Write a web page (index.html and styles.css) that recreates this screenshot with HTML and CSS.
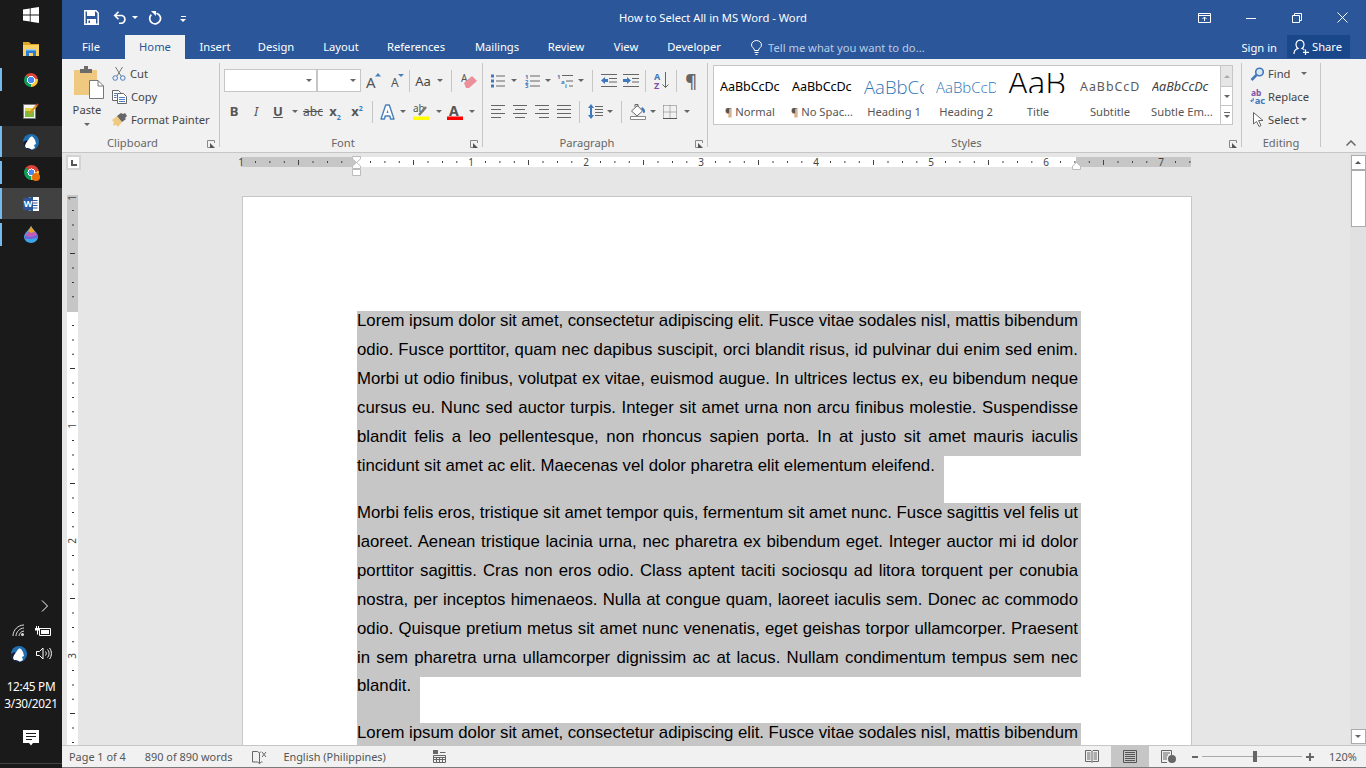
FILE: index.html
```html
<!DOCTYPE html>
<html lang="en">
<head>
<meta charset="utf-8">
<title>How to Select All in MS Word - Word</title>
<link rel="stylesheet" href="styles.css">
</head>
<body>
<div class="app">
  <aside class="taskbar">
    <div class="tb-item tb-start">
      <svg width="16" height="16" viewBox="0 0 16 16"><path fill="#fff" d="M0 2.4 6.8 1.4V7.5H0zM7.6 1.3 16 0V7.5H7.6zM0 8.4H6.8V14.6L0 13.6zM7.6 8.4H16V16L7.6 14.7z"/></svg>
    </div>
    <div class="tb-item">
      <svg width="16" height="14" viewBox="0 0 16 14"><path fill="#e0a526" d="M0 0H6L8 2H16V4H0z"/><path fill="#fbd065" d="M0 3H16V14H0z"/><path fill="#2b7cd3" d="M3 8H13V14H10V11H6V14H3z"/><path fill="#9fd0f5" d="M3 7H13V8.5H3z"/></svg>
    </div>
    <div class="tb-item tb-open"><span class="chrome"></span></div>
    <div class="tb-item">
      <svg width="16" height="16" viewBox="0 0 16 16"><path fill="#f6f6f0" stroke="#777" d="M.5 1.5H12.5V15.5H.5z"/><path fill="#7fbb3a" d="M2 8H11V14H2z"/><path fill="#e6d642" d="M2 5H11V8H2z"/><path stroke="#d8962a" stroke-width="2" d="M6 11 14 2"/><path stroke="#c0392b" stroke-width="2" d="M13.5 2.5 15 1"/></svg>
    </div>
    <div class="tb-item tb-open tb-running">
      <svg width="16" height="16" viewBox="0 0 16 16"><circle cx="8" cy="8" r="8" fill="#1f6fb0"/><path fill="#141a3a" d="M0 8A8 8 0 0 0 8 16L4 6z"/><path fill="#fff" d="M2 12C3 8 5 7 6.500 4 7.500 2.500 9 2 10 3L12 6 13 10 11 11 12 14 9 15.500 5 14 3 14z"/></svg>
    </div>
    <div class="tb-item tb-open">
      <span class="chrome chrome-badge"><span class="badge"></span></span>
    </div>
    <div class="tb-item tb-open tb-active">
      <svg width="16" height="16" viewBox="0 0 16 16"><path fill="#fff" d="M6 1H16V15H6z"/><path stroke="#2b579a" d="M10 4.500H14.500M10 7H14.500M10 9.500H14.500M10 12H14.500"/><path fill="#2b579a" d="M0 2.500 10 .8V15.200L0 13.500z"/><text x="5" y="11" class="word-w">W</text></svg>
    </div>
    <div class="tb-item tb-open">
      <svg width="14" height="17" viewBox="0 0 14 17"><path fill="#3ea6e6" d="M7 0C9 4 14 7 14 11A7 6 0 0 1 0 11C0 7 5 4 7 0z"/><path fill="#f0a020" d="M7 0C8.500 3 10 4 11 6L7 7 4 5.500C5 4 6.200 2.500 7 0z"/><path fill="#c45ab3" d="M4 5.500 7 7 11 6 13.500 9 7 11 1 10z"/><path fill="#6f63d8" d="M1 10 7 11 13.500 9 13.500 12 7 13 .5 13z"/></svg>
    </div>
    <div class="tray">
      <svg class="tray-chevron" width="8" height="12" viewBox="0 0 8 12"><path fill="none" stroke="#fff" d="M1 .5 6.500 6 1 11.500"/></svg>
      <div class="tray-row">
        <svg width="14" height="13" viewBox="0 0 14 13"><path fill="none" stroke="#ddd" d="M1 12C1 6 6 1 12 1M4 12C4 8 8 4 12 4M7 12C7 10 9 7 12 7"/><circle cx="10.500" cy="10.500" r="1.500" fill="#ddd"/></svg>
        <svg width="16" height="12" viewBox="0 0 16 12"><path fill="none" stroke="#fff" d="M4.500 3.500H15.500V10.500H4.500z"/><path fill="#fff" d="M6 5H14V9H6zM1 1H2V3H3V1H4V3H5V5.500H3V9.500H2V5.500H0V3H1z"/></svg>
      </div>
      <div class="tray-row">
        <svg width="16" height="16" viewBox="0 0 16 16"><circle cx="8" cy="8" r="8" fill="#1f6fb0"/><path fill="#141a3a" d="M0 8A8 8 0 0 0 8 16L4 6z"/><path fill="#fff" d="M2 12C3 8 5 7 6.500 4 7.500 2.500 9 2 10 3L12 6 13 10 11 11 12 14 9 15.500 5 14 3 14z"/></svg>
        <svg width="16" height="13" viewBox="0 0 16 13"><path fill="none" stroke="#fff" d="M.5 4.500H3.500L7 1V12L3.500 8.500H.5zM9.500 4.500C10.500 5.500 10.500 7.500 9.500 8.500M11.500 2.500C13.500 4.500 13.500 8.500 11.500 10.500M13.500 1C16 4 16 9 13.500 12"/></svg>
      </div>
      <div class="clock">12:45 PM</div>
      <div class="clock">3/30/2021</div>
      <svg class="notify" width="16" height="16" viewBox="0 0 16 16"><path fill="#fff" d="M0 0H16V13H10L8 15.500 6 13H0z"/><path stroke="#1a1a1a" d="M3 3.500H13M3 6.500H13M3 9.500H9"/></svg>
      <div class="tb-line"></div>
    </div>
  </aside>

  <main class="window">
    <header class="titlebar">
      <div class="qat">
        <svg class="qat-save" width="15" height="15" viewBox="0 0 15 15"><path fill="none" stroke="#fff" stroke-width="1.500" d="M.8.8H12L14.200 3V14.200H.8z"/><path fill="#fff" d="M3 1H11V6H3zM3 9H12V14H3z"/><path fill="#2b579a" d="M4.500 10.500H6V13H4.500z"/></svg>
        <svg class="qat-undo" width="15" height="13" viewBox="0 0 15 13"><path fill="none" stroke="#fff" stroke-width="1.600" d="M2 4.500H9A4 4 0 0 1 9 12.200H6"/><path fill="none" stroke="#fff" stroke-width="1.600" d="M5.500.7 1.700 4.500 5.500 8.300"/></svg>
        <span class="caret caret-white qat-caret"></span>
        <svg class="qat-redo" width="14" height="14" viewBox="0 0 14 14"><path fill="none" stroke="#fff" stroke-width="1.700" d="M8.500 2.200A5.400 5.400 0 1 1 3.300 3.600"/><path fill="#fff" d="M3 0H8V5z"/></svg>
        <span class="qat-more"><span class="qat-bar"></span><span class="caret caret-white"></span></span>
      </div>
      <div class="title">How to Select All in MS Word - Word</div>
      <div class="winctl">
        <svg width="13" height="10" viewBox="0 0 13 10"><path fill="none" stroke="#fff" d="M.5.500H12.500V9.500H.5zM.5 2.500H12.500M6.500 8V4M4.500 6 6.500 4 8.500 6"/></svg>
        <svg class="win-min" width="10" height="10" viewBox="0 0 10 10"><path stroke="#fff" d="M0 5.500H10"/></svg>
        <svg class="win-max" width="10" height="10" viewBox="0 0 10 10"><path fill="none" stroke="#fff" d="M.5 2.500H7.500V9.500H.5zM2.500 2.500V.5H9.500V7.500H7.500"/></svg>
        <svg class="win-close" width="11" height="11" viewBox="0 0 11 11"><path stroke="#fff" d="M.5.500 10.500 10.500M10.500.5.500 10.500"/></svg>
      </div>
    </header>

    <nav class="tabs">
      <span class="tab tab-file">File</span>
      <span class="tab tab-home">Home</span>
      <span class="tab tab-insert">Insert</span>
      <span class="tab tab-design">Design</span>
      <span class="tab tab-layout">Layout</span>
      <span class="tab tab-refs">References</span>
      <span class="tab tab-mail">Mailings</span>
      <span class="tab tab-review">Review</span>
      <span class="tab tab-view">View</span>
      <span class="tab tab-dev">Developer</span>
      <svg class="bulb" width="11" height="15" viewBox="0 0 11 15"><path fill="none" stroke="#fff" d="M3.500 10.500C3.500 8 .5 7.500.5 5A5 4.500 0 0 1 10.500 5C10.500 7.500 7.500 8 7.500 10.500zM3.500 12.500H7.500M4.500 14.500H6.500"/></svg>
      <span class="tellme">Tell me what you want to do...</span>
      <span class="signin">Sign in</span>
      <span class="share">
        <svg width="16" height="16" viewBox="0 0 16 16"><path fill="none" stroke="#fff" stroke-width="1.200" d="M1 15C1 11.500 3 10 5 9.500A4 4.500 0 1 1 9 9.500C10 9.800 10.800 10.300 11.300 11"/><path stroke="#fff" stroke-width="1.200" d="M12.500 10.500V16M10 13.300H16"/></svg>
        Share
      </span>
    </nav>

    <section class="ribbon">
      <div class="group g-clip">
        <div class="group-body clip-body">
          <div class="paste">
            <svg width="30" height="33" viewBox="0 0 30 33"><path fill="#f0c981" d="M0 4H23V27H18V13H0z"/><path fill="#f0c981" d="M0 12H18V29H0z"/><path fill="#6b6b6b" d="M6 3H10V0H14V3H18V7H6z"/><path fill="#fff" stroke="#777" d="M15.500 14.500H24L29.500 20V32.500H15.500z"/><path fill="none" stroke="#777" d="M24 14.500V20H29.500"/></svg>
            <span class="paste-label">Paste</span>
            <span class="caret"></span>
          </div>
          <div class="clip-list">
            <div class="small-btn">
              <svg width="14" height="15" viewBox="0 0 14 15"><path fill="none" stroke="#777" d="M3.500 1 9 10M10.500 1 5 10"/><circle cx="3.200" cy="12" r="2.300" fill="none" stroke="#4a7fbb"/><circle cx="10.800" cy="12" r="2.300" fill="none" stroke="#4a7fbb"/></svg>
              <span>Cut</span>
            </div>
            <div class="small-btn">
              <svg width="15" height="14" viewBox="0 0 15 14"><path fill="#fff" stroke="#666" d="M.5.500H6.500L8.500 2.500V10.500H.5z"/><path fill="#fff" stroke="#666" d="M5.500 3.500H11.500L14.500 6.500V13.500H5.500z"/><path stroke="#4a7fbb" d="M2 3.500H5M2 5.500H4.500M2 7.500H4.500M7 7.500H13M7 9.500H13M7 11.500H13"/></svg>
              <span>Copy</span>
            </div>
            <div class="small-btn">
              <svg width="15" height="14" viewBox="0 0 15 14"><path fill="#f0c981" d="M0 7 5 3 10 9 6 14C5 13 4 11 3 12L2 13 1 11 2 9.500z"/><path fill="#666" d="M5 3 9 0 11 1 13 0 15 3 13 5 14 6 10 9z"/></svg>
              <span>Format Painter</span>
            </div>
          </div>
        </div>
        <div class="group-label with-launcher">Clipboard<svg class="launcher" width="8" height="8" viewBox="0 0 8 8"><path fill="none" stroke="#888" d="M7.500 3V.5H.5V7.500H3"/><path fill="#555" d="M3 3 8 8H3z"/></svg></div>
      </div>

      <div class="group g-font">
        <div class="group-body">
          <div class="tool-row font-r1">
            <span class="combo"><span class="caret"></span></span>
            <span class="combo"><span class="caret"></span></span>
            <svg width="15" height="15" viewBox="0 0 15 15"><text x="0" y="15" class="big-a">A</text><path fill="#4a7fbb" d="M9 3.500 12 0 15 3.500z"/></svg>
            <svg width="13" height="13" viewBox="0 0 13 13"><text x="0" y="13" class="small-a">A</text><path fill="#4a7fbb" d="M7 0H13L10 3z"/></svg>
            <span class="vsep"></span>
            <span class="aa">Aa</span>
            <span class="caret"></span>
            <span class="vsep"></span>
            <svg width="17" height="16" viewBox="0 0 17 16"><text x="0" y="9" class="erase-a">A</text><path fill="#ec8f9a" d="M3 10 11 3 16 8 8 15 5 15z"/></svg>
          </div>
          <div class="tool-row font-r2">
            <span class="fmt fmt-b">B</span>
            <span class="fmt fmt-i">I</span>
            <span class="fmt fmt-u">U</span>
            <span class="caret"></span>
            <span class="fmt-abc">abc</span>
            <span class="fmt-sub">x<sub>2</sub></span>
            <span class="fmt-sub">x<sup>2</sup></span>
            <span class="vsep"></span>
            <svg width="15" height="16" viewBox="0 0 15 16"><path fill="#fff" stroke="#4a7fbb" stroke-width="1.400" stroke-linejoin="round" d="M5.700 1H9.300L14 15H10.600L9.800 12H5.200L4.400 15H1z"/><path fill="#4a7fbb" d="M6.500 9H8.500L7.500 5.500z"/></svg>
            <span class="caret"></span>
            <svg width="16" height="16" viewBox="0 0 16 16"><text x="0" y="8" class="hl-text">ab</text><path stroke="#777" stroke-width="2.500" d="M6 11 13 3"/><path fill="#ffff00" d="M0 12.500H16V16H0z"/></svg>
            <span class="caret"></span>
            <svg width="16" height="16" viewBox="0 0 16 16"><text x="2" y="12" class="fc-text">A</text><path fill="#ff0000" d="M0 12.500H16V16H0z"/></svg>
            <span class="caret"></span>
          </div>
        </div>
        <div class="group-label with-launcher">Font<svg class="launcher" width="8" height="8" viewBox="0 0 8 8"><path fill="none" stroke="#888" d="M7.500 3V.5H.5V7.500H3"/><path fill="#555" d="M3 3 8 8H3z"/></svg></div>
      </div>

      <div class="group g-para">
        <div class="group-body">
          <div class="tool-row para-r1">
            <svg width="14" height="14" viewBox="0 0 14 14"><path fill="#3f78bc" d="M0 .5H3V3.500H0zM0 5.500H3V8.500H0zM0 10.500H3V13.500H0z"/><path stroke="#666" d="M5 2H14M5 7H14M5 12H14"/></svg>
            <span class="caret"></span>
            <svg width="15" height="14" viewBox="0 0 15 14"><text x="0" y="4.500" class="list-n">1</text><text x="0" y="9.500" class="list-n">2</text><text x="0" y="14" class="list-n">3</text><path stroke="#666" d="M5 2H15M5 7H15M5 12H15"/></svg>
            <span class="caret"></span>
            <svg width="16" height="14" viewBox="0 0 16 14"><text x="0" y="4.500" class="list-n">1</text><text x="4" y="9.500" class="list-n">a</text><text x="8" y="14" class="list-n">i</text><path stroke="#666" d="M5 1.500H16M9 7H16M12 12H16"/></svg>
            <span class="caret"></span>
            <span class="vsep"></span>
            <svg width="16" height="13" viewBox="0 0 16 13"><path stroke="#666" d="M0 .5H16M8 4.500H16M8 8H16M0 12.500H16"/><path fill="#3f78bc" d="M0 6.500 4 3V5H7V8H4V10z"/></svg>
            <svg width="16" height="13" viewBox="0 0 16 13"><path stroke="#666" d="M0 .5H16M9 4.500H16M9 8H16M0 12.500H16"/><path fill="#3f78bc" d="M8 6.500 4 3V5H0V8H4V10z"/></svg>
            <span class="vsep"></span>
            <svg width="15" height="17" viewBox="0 0 15 17"><text x="0" y="7.500" class="sort-a">A</text><text x="0" y="16.500" class="sort-z">Z</text><path fill="none" stroke="#666" d="M11.500 0V15.500M8.500 12.500 11.500 15.500 14.500 12.500"/></svg>
            <span class="vsep"></span>
            <span class="pilcrow">¶</span>
          </div>
          <div class="tool-row para-r2">
            <svg class="al" width="14" height="13" viewBox="0 0 14 13"><path stroke="#666" d="M0 .5H14M0 4.500H10M0 8.500H14M0 12.500H10"/></svg>
            <svg class="al" width="14" height="13" viewBox="0 0 14 13"><path stroke="#666" d="M0 .5H14M2 4.500H12M0 8.500H14M2 12.500H12"/></svg>
            <svg class="al" width="14" height="13" viewBox="0 0 14 13"><path stroke="#666" d="M0 .5H14M4 4.500H14M0 8.500H14M4 12.500H14"/></svg>
            <svg class="al" width="14" height="13" viewBox="0 0 14 13"><path stroke="#666" d="M0 .5H14M0 4.500H14M0 8.500H14M0 12.500H14"/></svg>
            <span class="vsep"></span>
            <svg width="15" height="15" viewBox="0 0 15 15"><path fill="#3f78bc" d="M3 0 6 4H4V11H6L3 15 0 11H2V4H0z"/><path stroke="#666" d="M7 2.500H15M7 5.500H15M7 8.500H15M7 11.500H15"/></svg>
            <span class="caret"></span>
            <span class="vsep"></span>
            <svg width="17" height="17" viewBox="0 0 17 17"><path fill="#fff" stroke="#666" d="M1.500 8 7.500 2.500 12.500 8 7 13z"/><path fill="none" stroke="#666" d="M5 4V1.500H8V4"/><path fill="#3f78bc" d="M12 4C14 5 15.500 7 15 9.500L13 10C13 8 12.500 7 11 6z"/><path fill="#fff" stroke="#888" d="M.5 13.500H15.500V16.500H.5z"/></svg>
            <span class="caret"></span>
            <svg width="14" height="14" viewBox="0 0 14 14"><path fill="none" stroke="#777" stroke-dasharray="1 1" d="M.5.500H13.500V13.500M.5.500V13.500M7 .5V13.500M.5 7H13.500"/><path stroke="#555" d="M0 13.500H14"/></svg>
            <span class="caret"></span>
          </div>
        </div>
        <div class="group-label with-launcher">Paragraph<svg class="launcher" width="8" height="8" viewBox="0 0 8 8"><path fill="none" stroke="#888" d="M7.500 3V.5H.5V7.500H3"/><path fill="#555" d="M3 3 8 8H3z"/></svg></div>
      </div>

      <div class="group g-styles">
        <div class="group-body">
          <div class="gallery">
            <div class="style-item"><div class="sample s-normal">AaBbCcDc</div><div class="style-name">¶ Normal</div></div>
            <div class="style-item"><div class="sample s-normal">AaBbCcDc</div><div class="style-name">¶ No Spac...</div></div>
            <div class="style-item"><div class="sample s-h1">AaBbCc</div><div class="style-name">Heading 1</div></div>
            <div class="style-item"><div class="sample s-h2">AaBbCcD</div><div class="style-name">Heading 2</div></div>
            <div class="style-item"><div class="sample"><div class="s-title">AaB</div></div><div class="style-name">Title</div></div>
            <div class="style-item"><div class="sample s-sub">AaBbCcD</div><div class="style-name">Subtitle</div></div>
            <div class="style-item"><div class="sample s-em">AaBbCcDc</div><div class="style-name">Subtle Em...</div></div>
            <div class="gal-scroll">
              <span class="gal-btn gal-up"><span class="caret caret-up"></span></span>
              <span class="gal-btn gal-down"><span class="caret"></span></span>
              <span class="gal-btn gal-more"><span class="more-bar"></span><span class="caret"></span></span>
            </div>
          </div>
        </div>
        <div class="group-label with-launcher">Styles<svg class="launcher" width="8" height="8" viewBox="0 0 8 8"><path fill="none" stroke="#888" d="M7.500 3V.5H.5V7.500H3"/><path fill="#555" d="M3 3 8 8H3z"/></svg></div>
      </div>

      <div class="group g-edit">
        <div class="group-body edit-body">
          <div class="small-btn">
            <svg width="14" height="14" viewBox="0 0 14 14"><circle cx="9" cy="5" r="3.800" fill="#d9e7f5" stroke="#3f78bc" stroke-width="1.600"/><path stroke="#3f78bc" stroke-width="2.500" d="M6 8 1 13"/></svg>
            <span>Find</span><span class="caret find-caret"></span>
          </div>
          <div class="small-btn">
            <svg width="16" height="16" viewBox="0 0 16 16"><text x="1" y="7" class="rep-ab">ab</text><text x="5" y="15" class="rep-ac">ac</text><path fill="none" stroke="#3f78bc" d="M3.500 9V12H.8M2.500 10.500.8 12 2.500 13.500"/></svg>
            <span>Replace</span>
          </div>
          <div class="small-btn">
            <svg class="sel-ic" width="11" height="15" viewBox="0 0 11 15"><path fill="#fff" stroke="#666" d="M.5.500V12L3.500 9.500 6 14.500 8 13.500 5.500 8.500H10z"/></svg>
            <span>Select</span><span class="caret sel-caret"></span>
          </div>
        </div>
        <div class="group-label">Editing</div>
      </div>
      <svg class="collapse" width="10" height="6" viewBox="0 0 10 6"><path fill="none" stroke="#666" stroke-width="1.500" d="M.5 5.500 5 1 9.500 5.500"/></svg>
    </section>

    <div class="workspace">
      <div class="canvas">
        <div class="hruler-row">
          <span class="tab-sel"><span class="tab-l"></span></span>
          <svg class="hruler" width="950" height="22" viewBox="0 0 950 22">
            <defs>
              <pattern id="ht" patternUnits="userSpaceOnUse" width="115" height="22">
                <path fill="#444" d="M14 6h1v2h-1zM28.400 6h1v2h-1zM42.800 6h1v2h-1zM71.500 6h1v2h-1zM86 6h1v2h-1zM100.300 6h1v2h-1z"/>
                <path fill="#444" d="M57 5h1v5h-1z"/>
              </pattern>
            </defs>
            <rect x="0" y="2" width="950" height="10" fill="#c6c6c6"/>
            <rect x="115" y="2" width="720" height="10" fill="#fff"/>
            <rect x="0" y="1" width="950" height="12" fill="url(#ht)"/>
            <text class="rnum" x="0" y="11">1</text><text class="rnum" x="230" y="11">1</text><text class="rnum" x="345" y="11">2</text><text class="rnum" x="460" y="11">3</text><text class="rnum" x="575" y="11">4</text><text class="rnum" x="690" y="11">5</text><text class="rnum" x="805" y="11">6</text><text class="rnum" x="920" y="11">7</text>
            <path fill="#fff" stroke="#bbb" d="M111.500 1.500H119.500V4L115.500 7.500 111.500 4zM115.500 7.500 119.500 11V13.500H111.500V11z"/>
            <path fill="#fff" stroke="#bbb" d="M111.500 14.500H119.500V20.500H111.500z"/>
            <path fill="#fff" stroke="#bbb" d="M835.500 7.500 839.500 11V14.500H831.500V11z"/>
          </svg>
        </div>
        <div class="page-row">
          <svg class="vruler" width="12" height="560" viewBox="0 0 12 560">
            <defs>
              <pattern id="vt" patternUnits="userSpaceOnUse" y="1" width="12" height="115">
                <path fill="#333" d="M5 14h2v1h-2zM5 28.400h2v1h-2zM5 42.800h2v1h-2zM5 71.500h2v1h-2zM5 86h2v1h-2zM5 100.300h2v1h-2z"/>
                <path fill="#333" d="M3 57h5v1h-5z"/>
              </pattern>
            </defs>
            <rect x="0" width="11" height="560" fill="#fff"/>
            <rect x="0" width="11" height="117" fill="#c6c6c6"/>
            <rect x="0" width="11" height="560" fill="url(#vt)"/>
            <text class="rnum" transform="translate(9 3) rotate(-90)">1</text>
            <text class="rnum" transform="translate(9 231) rotate(-90)">1</text>
            <text class="rnum" transform="translate(9 346) rotate(-90)">2</text>
            <text class="rnum" transform="translate(9 461) rotate(-90)">3</text>
          </svg>
          <article class="page">
            <div class="para">
              <div class="line">Lorem ipsum dolor sit amet, consectetur adipiscing elit. Fusce vitae sodales nisl, mattis bibendum</div>
              <div class="line">odio. Fusce porttitor, quam nec dapibus suscipit, orci blandit risus, id pulvinar dui enim sed enim.</div>
              <div class="line">Morbi ut odio finibus, volutpat ex vitae, euismod augue. In ultrices lectus ex, eu bibendum neque</div>
              <div class="line">cursus eu. Nunc sed auctor turpis. Integer sit amet urna non arcu finibus molestie. Suspendisse</div>
              <div class="line">blandit felis a leo pellentesque, non rhoncus sapien porta. In at justo sit amet mauris iaculis</div>
              <div class="line last last-a">tincidunt sit amet ac elit. Maecenas vel dolor pharetra elit elementum eleifend.</div>
            </div>
            <div class="para">
              <div class="line">Morbi felis eros, tristique sit amet tempor quis, fermentum sit amet nunc. Fusce sagittis vel felis ut</div>
              <div class="line">laoreet. Aenean tristique lacinia urna, nec pharetra ex bibendum eget. Integer auctor mi id dolor</div>
              <div class="line">porttitor sagittis. Cras non eros odio. Class aptent taciti sociosqu ad litora torquent per conubia</div>
              <div class="line">nostra, per inceptos himenaeos. Nulla at congue quam, laoreet iaculis sem. Donec ac commodo</div>
              <div class="line">odio. Quisque pretium metus sit amet nunc venenatis, eget geishas torpor ullamcorper. Praesent</div>
              <div class="line">in sem pharetra urna ullamcorper dignissim ac at lacus. Nullam condimentum tempus sem nec</div>
              <div class="line last last-b">blandit.</div>
            </div>
            <div class="para">
              <div class="line">Lorem ipsum dolor sit amet, consectetur adipiscing elit. Fusce vitae sodales nisl, mattis bibendum</div>
            </div>
          </article>
        </div>
      </div>
      <div class="vscroll">
        <span class="sb-btn"><span class="caret caret-up caret-dark"></span></span>
        <span class="sb-thumb"></span>
        <span class="sb-btn sb-down"><span class="caret caret-dark"></span></span>
      </div>
    </div>

    <footer class="statusbar">
      <span class="st-page">Page 1 of 4</span>
      <span class="st-words">890 of 890 words</span>
      <svg class="st-proof" width="15" height="14" viewBox="0 0 15 14"><path fill="none" stroke="#666" d="M.5 1.500H5.500L7.500 3V13.500L5.500 12H.5zM7.500 3 9 1.500M7.500 13.500 9.500 12H10.500"/><path stroke="#666" d="M10 2 14 7M14 2 10 7"/></svg>
      <span class="st-lang">English (Philippines)</span>
      <svg class="st-macro" width="13" height="13" viewBox="0 0 13 13"><path fill="#666" d="M0 0H5V4H0z"/><path fill="none" stroke="#666" d="M.5 5.500H12.500V12.500H.5zM.5 7.500H12.500M.5 9.500H12.500M3.500 7.500V12.500M6.500 7.500V12.500M9.500 7.500V12.500M7 2.500H12.500"/></svg>
      <span class="st-right">
        <span class="view-btn">
          <svg width="14" height="13" viewBox="0 0 14 13"><path fill="none" stroke="#666" d="M.5.500H6L7 1.500 8 .5H13.500V11.500H8L7 12.500 6 11.500H.5zM7 1.500V12M2 3H5.500M2 5H5.500M2 7H5.500M2 9H5.500M8.500 3H12M8.500 5H12M8.500 7H12M8.500 9H12"/></svg>
        </span>
        <span class="view-btn view-active">
          <svg width="14" height="13" viewBox="0 0 14 13"><path fill="none" stroke="#555" d="M.5.500H13.500V12.500H.5zM2 2.500H12M2 4.500H12M2 6.500H12M2 8.500H12M2 10.500H12"/></svg>
        </span>
        <span class="view-btn">
          <svg width="15" height="13" viewBox="0 0 15 13"><path fill="none" stroke="#666" d="M.5.500H10.500V5M.5.500V12.500H6M2 3H9M2 5H7M2 7H6M2 9H6"/><circle cx="11" cy="9" r="4" fill="#666"/></svg>
        </span>
        <span class="zoom-minus"></span>
        <span class="zoom-slider"><span class="zoom-thumb"></span></span>
        <span class="zoom-plus"></span>
        <span class="zoom-val">120%</span>
      </span>
    </footer>
  </main>
</div>
</body>
</html>
```
FILE: styles.css
```css
* { box-sizing: border-box; }
html, body { margin: 0; height: 100%; overflow: hidden; }
body { font-family: "Noto Sans", "Open Sans", sans-serif; font-size: 11.2px; color: #444; }
svg { display: block; flex: none; }
.app { display: flex; width: 1366px; height: 768px; overflow: hidden; }

/* taskbar */
.taskbar { width: 62px; flex: none; background: #1a1a1a; display: flex; flex-direction: column; color: #fff; }
.tb-item { height: 31px; display: flex; align-items: center; justify-content: center; position: relative; flex: none; }
.tb-start { height: 33px; padding-bottom: 3px; }
.tb-open::before { content: ""; position: absolute; left: 0; top: 4px; bottom: 4px; width: 2px; background: #76b9ed; }
.tb-running { background: #2e2e2e; }
.tb-active { background: #414141; }
.tb-running::before, .tb-active::before { top: 0; bottom: 0; }
.chrome { width: 14px; height: 14px; border-radius: 50%; display: block; position: relative;
  background: radial-gradient(circle, #4a8af4 0 3px, #fff 3px 4px, transparent 4px),
    conic-gradient(from -50deg, #db4437 0 130deg, #fcc934 130deg 230deg, #0f9d58 230deg 360deg); }
.chrome-badge { width: 15px; height: 15px; }
.badge { position: absolute; right: -1px; bottom: -1px; width: 8px; height: 8px; border-radius: 50%; background: #e8710a; }
.tray { margin-top: auto; display: flex; flex-direction: column; align-items: center; }
.tray-chevron { margin: 0 0 0 28px; }
.tray-row { display: flex; align-items: center; justify-content: center; gap: 9px; height: 23px; width: 100%; }
.tray-row:nth-of-type(1) { margin-top: 7px; }
.clock { font-size: 11.8px; line-height: 17px; color: #fff; white-space: nowrap; letter-spacing: -.3px; }
.tray-row + .clock { margin-top: 13px; }
.notify { margin-top: 18px; }
.tb-line { width: 100%; height: 5px; margin-top: 17px; border-top: 1px solid #444; }

/* main */
.window { flex: 1; min-width: 0; display: flex; flex-direction: column; background: #e6e6e6; }
.titlebar { height: 35px; background: #2b579a; display: flex; align-items: center; position: relative; color: #fff; flex: none; }
.qat { display: flex; align-items: center; padding-left: 22px; }
.qat-undo { margin-left: 14px; }
.qat-caret { margin-left: 4px; }
.qat-redo { margin-left: 10px; }
.qat-more { display: flex; flex-direction: column; gap: 2px; align-items: center; margin-left: 18px; padding-top: 2px; }
.qat-bar { width: 5px; height: 1px; background: #fff; }
.title { position: absolute; left: 0; right: 2px; top: 0; line-height: 35px; text-align: center; font-size: 11.2px; pointer-events: none; }
.winctl { margin-left: auto; display: flex; align-items: center; padding-right: 18px; }
.win-min { margin-left: 35px; }
.win-max { margin-left: 36px; }
.win-close { margin-left: 35px; }

.tabs { height: 24px; background: #2b579a; display: flex; align-items: center; color: #fff; flex: none; position: relative; }
.tab { height: 24px; line-height: 24px; text-align: center; flex: none; }
.tab-file { width: 63px; padding-right: 5px; }
.tab-home { width: 60px; background: #f1f1f1; color: #2b579a; }
.tab-insert { width: 60px; }
.tab-design { width: 62px; }
.tab-layout { width: 68px; }
.tab-refs { width: 82px; }
.tab-mail { width: 80px; }
.tab-review { width: 58px; }
.tab-view { width: 62px; }
.tab-dev { width: 74px; }
.bulb { margin-left: 20px; }
.tellme { margin-left: 6px; color: #bccbe2; white-space: nowrap; }
.signin { margin-left: auto; margin-right: 10px; }
.share { width: 63px; height: 23px; background: #19478a; display: flex; align-items: center; gap: 3px; padding-left: 6px; margin-right: 16px; margin-top: -1px; }

/* ribbon */
.ribbon { height: 94px; background: #f1f1f1; border-bottom: 1px solid #c6c6c6; display: flex; align-items: flex-start; padding-top: 4px; flex: none; position: relative; }
.group { height: 84px; border-right: 1px solid #c6c6c6; display: flex; flex-direction: column; flex: none; }
.g-clip { width: 158px; }
.g-font { width: 263px; }
.g-para { width: 225px; }
.g-styles { width: 534px; }
.g-edit { width: 79px; }
.group-body { height: 72px; flex: none; }
.group-label { height: 12px; line-height: 16px; text-align: center; position: relative; color: #666; }
.with-launcher { padding-right: 16px; }
.launcher { position: absolute; right: 4px; top: 5px; }
.caret { width: 0; height: 0; border: solid transparent; border-width: 3px 3px 0; border-top-color: #666; display: block; flex: none; }
.caret-white { border-top-color: #fff; }
.caret-up { border-width: 0 3px 3px; border-bottom-color: #aaa; }
.caret-dark.caret-up { border-bottom-color: #555; }

.clip-body { display: flex; }
.paste { width: 50px; display: flex; flex-direction: column; align-items: center; padding: 3px 0 0 3px; }
.paste-label { line-height: 16px; margin: 3px 0 0 -3px; }
.paste .caret { margin: 5px 0 0 -3px; }
.clip-list { margin-top: -1px; }
.small-btn { height: 23px; display: flex; align-items: center; white-space: nowrap; }
.small-btn > svg { margin-right: 4px; }

.tool-row { display: grid; height: 23px; align-items: center; justify-items: center; }
.font-r1 { margin: 6px 0 8px 4px; grid-template-columns: 93px 44px 24px 24px 1px 26px 7px 17px 18px; }
.font-r2 { margin-left: 3px; grid-template-columns: 22px 22px 22px 11px 26px 18px 26px 5px 24px 8px 28px 7px 26px 7px; }
.para-r1 { margin: 6px 0 8px 4px; grid-template-columns: 21px 12px 24px 8px 26px 6px 16px 18px 26px 2px 30px 1px 28px; }
.para-r2 { margin-left: 4px; grid-template-columns: 22px 22px 22px 22px 8px 24px 6px 16px 18px 12px 22px 12px; }
.combo { height: 23px; width: 100%; background: #fff; border: 1px solid #c6c6c6; display: flex; align-items: center; justify-content: flex-end; padding-right: 4px; }
.vsep { width: 1px; height: 22px; background: #c6c6c6; }
.aa { font-size: 13px; }
.big-a { font: 15px "Noto Sans", sans-serif; fill: #555; }
.small-a { font: 12px "Noto Sans", sans-serif; fill: #555; }
.erase-a { font: 10px "Noto Sans", sans-serif; fill: #555; }
.hl-text { font: 10px "Noto Sans", sans-serif; fill: #555; }
.fc-text { font: bold 14px "Noto Sans", sans-serif; fill: #555; }
.list-n { font: bold 6px "Noto Sans", sans-serif; fill: #3f78bc; }
.sort-a { font: bold 9px "Noto Sans", sans-serif; fill: #3f78bc; }
.sort-z { font: bold 9px "Noto Sans", sans-serif; fill: #7d4fa8; }
.rep-ab { font: bold 9px "Noto Sans", sans-serif; fill: #7d4fa8; }
.rep-ac { font: bold 10px "Noto Sans", sans-serif; fill: #3f78bc; }
.word-w { font: bold 9px "Noto Sans", sans-serif; fill: #fff; text-anchor: middle; }
.rnum { font: 10px "Noto Sans", sans-serif; fill: #444; text-anchor: middle; }
.hruler, .vruler { overflow: visible; }
.fmt { font-size: 13px; color: #555; line-height: 15px; }
.fmt-b { font-weight: 700; }
.fmt-i { font-style: italic; }
.fmt-u { font-weight: 700; text-decoration: underline; }
.fmt-abc { text-decoration: line-through; font-size: 12px; color: #555; }
.fmt-sub { font-size: 13px; font-weight: 700; color: #555; line-height: 15px; }
.fmt-sub sub, .fmt-sub sup { font-size: 7px; color: #3f78bc; line-height: 0; }
.pilcrow { font-size: 18px; color: #666; line-height: 20px; font-weight: 600; }

.gallery { margin: 2px 0 0 5px; width: 520px; height: 60px; background: #fff; border: 1px solid #c6c6c6; display: flex; }
.style-item { width: 72px; flex: none; text-align: center; overflow: hidden; }
.sample { height: 37px; line-height: 42px; width: 60px; margin: 0 auto; overflow: hidden; white-space: nowrap; text-align: left; color: #000; }
.s-normal { font-size: 12.6px; letter-spacing: -.1px; }
.s-h1 { font-size: 18.5px; color: #2e74b5; font-family: "Open Sans", sans-serif; font-weight: 300; }
.s-h2 { font-size: 15px; color: #2e74b5; font-family: "Open Sans", sans-serif; font-weight: 300; }
.s-title { font-family: "Open Sans", sans-serif; font-weight: 300; font-size: 33px; line-height: 20px; height: 20px; margin-top: 7px; overflow: hidden; color: #000; }
.s-sub { font-size: 12.4px; letter-spacing: 1px; color: #5a5a5a; }
.s-em { font-style: italic; color: #404040; font-size: 12.6px; }
.style-name { line-height: 18px; color: #555; white-space: nowrap; }
.gal-scroll { width: 13px; flex: none; display: flex; flex-direction: column; margin: -1px -1px -1px auto; border: 1px solid #c6c6c6; }
.gal-btn { display: flex; flex-direction: column; gap: 2px; align-items: center; justify-content: center; border-bottom: 1px solid #c6c6c6; }
.gal-up { height: 21px; background: #e6e6e6; }
.gal-down { height: 19px; }
.gal-more { flex: 1; border-bottom: 0; }
.more-bar { width: 6px; height: 1px; background: #666; }

.edit-body { padding: 0 0 0 8px; margin-top: -1px; height: 73px; }
.edit-body .small-btn > svg { width: 15px; margin-right: 3px; }
.find-caret { margin-left: 10px; }
.sel-caret { margin-left: 2px; }
.sel-ic { padding-left: 2px; }
.collapse { margin: 77px 0 0 25px; }

/* workspace */
.workspace { flex: 1; min-height: 0; display: flex; }
.canvas { flex: 1; min-width: 0; overflow: hidden; }
.hruler-row { height: 43px; display: flex; align-items: flex-start; padding: 2px 0 0 4px; }
.tab-sel { width: 15px; height: 15px; background: #fff; border: 2px solid #d4d4d4; margin-right: 160px; position: relative; flex: none; }
.tab-l { position: absolute; left: 3px; top: 3px; width: 6px; height: 6px; border-left: 2px solid #555; border-bottom: 2px solid #555; }
.page-row { display: flex; align-items: flex-start; padding-left: 5px; }
.vruler { margin-top: -1px; margin-right: 163px; }
.page { width: 950px; height: 700px; flex: none; background: #fff; border: 1px solid #c6c6c6; padding: 114px 0 0 114px; font-family: "Liberation Sans", Arial, sans-serif; font-size: 16.77px; color: #000; }
.line { width: 724px; padding-right: 3px; height: 29px; line-height: 19px; background: #c6c6c6; text-align: justify; text-align-last: justify; word-spacing: -.6px; }
.last { height: 47px; text-align-last: left; white-space: nowrap; word-spacing: 0; }
.last-a { width: 587px; }
.last-b { width: 63px; height: 46px; line-height: 17px; }

.vscroll { width: 16px; flex: none; background: #e1e1e1; display: flex; flex-direction: column; align-items: center; padding-top: 2px; }
.sb-btn { width: 15px; height: 15px; background: #fff; border: 1px solid #ababab; display: flex; align-items: center; justify-content: center; flex: none; }
.sb-thumb { width: 15px; height: 57px; background: #fff; border: 1px solid #ababab; flex: none; }
.sb-down { margin-top: auto; margin-bottom: 1px; }

/* status */
.statusbar { height: 23px; flex: none; background: #f1f1f1; border-top: 1px solid #c6c6c6; border-bottom: 1px solid #7a7a7a; display: flex; align-items: center; padding: 0 0 0 7px; font-size: 10.9px; color: #555; white-space: nowrap; }
.st-page, .st-words, .st-lang { padding-bottom: 1px; }
.st-words { margin-left: 19px; }
.st-proof { margin-left: 20px; }
.st-lang { margin-left: 16px; }
.st-macro { margin-left: 47px; }
.st-right { margin-left: auto; display: flex; align-items: center; height: 100%; }
.view-btn { width: 38px; height: 100%; display: flex; align-items: center; justify-content: center; }
.view-active { background: #c6c6c6; }
.zoom-minus { width: 6px; height: 2px; background: #666; margin-left: 5px; }
.zoom-slider { width: 100px; height: 1px; background: #aaa; margin-left: 4px; position: relative; }
.zoom-thumb { position: absolute; left: 51px; top: -5px; width: 4px; height: 11px; background: #666; }
.zoom-plus { width: 8px; height: 8px; margin-left: 4px; background: linear-gradient(#666,#666) center/8px 2px no-repeat, linear-gradient(#666,#666) center/2px 8px no-repeat; }
.zoom-val { margin-left: 15px; width: 28px; margin-right: 9px; }
```
